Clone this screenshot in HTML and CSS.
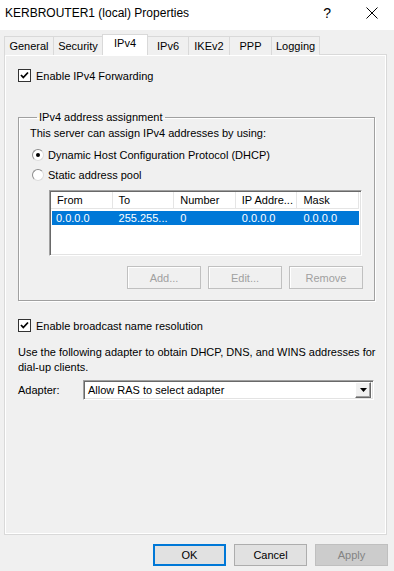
FILE: index.html
```html
<!DOCTYPE html>
<html lang="en">
<head>
    <meta charset="UTF-8">
    <meta name="viewport" content="width=device-width, initial-scale=1.0">
    <title>KERBROUTER1 (local) Properties</title>
    <link rel="stylesheet" href="styles.css">
</head>
<body>

    <div class="titlebar">
        <span class="title">KERBROUTER1 (local) Properties</span>
        <span class="help">?</span>
        <svg class="close" width="12" height="12" viewBox="0 0 12 12">
            <path d="M0.5 0.5 L11.5 11.5 M11.5 0.5 L0.5 11.5" stroke="#000" stroke-width="1" fill="none"/>
        </svg>
    </div>

    <div class="tabs">
        <div class="tab">General</div>
        <div class="tab">Security</div>
        <div class="tab active">IPv4</div>
        <div class="tab">IPv6</div>
        <div class="tab">IKEv2</div>
        <div class="tab">PPP</div>
        <div class="tab">Logging</div>
    </div>

    <div class="page">
        <label class="check-row">
            <span class="checkbox">
                <svg width="11" height="11" viewBox="0 0 11 11"><path d="M2 5 L4.3 7.5 L9 2.5" stroke="#000" stroke-width="1.8" fill="none"/></svg>
            </span>
            Enable IPv4 Forwarding
        </label>

        <fieldset class="group">
            <legend>IPv4 address assignment</legend>
            <div class="group-text">This server can assign IPv4 addresses by using:</div>
            <label class="radio-row">
                <span class="radio checked"></span>
                Dynamic Host Configuration Protocol (DHCP)
            </label>
            <label class="radio-row second">
                <span class="radio"></span>
                Static address pool
            </label>

            <div class="listview">
                <div class="lv-header">
                    <div class="lv-col first">From</div>
                    <div class="lv-col">To</div>
                    <div class="lv-col">Number</div>
                    <div class="lv-col">IP Addre...</div>
                    <div class="lv-col">Mask</div>
                </div>
                <div class="lv-row selected">
                    <div class="lv-cell first">0.0.0.0</div>
                    <div class="lv-cell">255.255...</div>
                    <div class="lv-cell">0</div>
                    <div class="lv-cell">0.0.0.0</div>
                    <div class="lv-cell">0.0.0.0</div>
                </div>
            </div>

            <div class="pool-buttons">
                <button class="btn disabled">Add...</button>
                <button class="btn disabled">Edit...</button>
                <button class="btn disabled">Remove</button>
            </div>
        </fieldset>

        <label class="check-row broadcast">
            <span class="checkbox">
                <svg width="11" height="11" viewBox="0 0 11 11"><path d="M2 5 L4.3 7.5 L9 2.5" stroke="#000" stroke-width="1.8" fill="none"/></svg>
            </span>
            Enable broadcast name resolution
        </label>

        <p class="note">Use the following adapter to obtain DHCP, DNS, and WINS addresses for<br>dial-up clients.</p>

        <div class="adapter-row">
            <span class="adapter-label">Adapter:</span>
            <div class="combo">
                <span class="combo-text">Allow RAS to select adapter</span>
                <span class="combo-btn">
                    <svg width="7" height="4" viewBox="0 0 7 4"><path d="M0 0 H7 L3.5 4 Z" fill="#000"/></svg>
                </span>
            </div>
        </div>
    </div>

    <div class="footer">
        <button class="btn dlg default">OK</button>
        <button class="btn dlg">Cancel</button>
        <button class="btn dlg off">Apply</button>
    </div>

</body>
</html>
```

FILE: styles.css
```css
* {
    margin: 0;
    padding: 0;
    box-sizing: border-box;
}

body {
    width: 394px;
    height: 571px;
    overflow: hidden;
    background-color: #f0f0f0;
    font-family: "Liberation Sans", Arial, sans-serif;
    font-size: 11px;
    color: #000;
}

/* title bar */
.titlebar {
    height: 30px;
    background-color: #fff;
    display: flex;
    align-items: center;
    padding-left: 5px;
}

.title {
    flex: 1;
    font-size: 12px;
    margin-top: -4px;
}

.help {
    font-size: 14px;
    margin-right: 35px;
    margin-top: -4px;
}

.close {
    margin-right: 16px;
    margin-top: -4px;
}

/* tabs */
.tabs {
    display: flex;
    align-items: flex-end;
    height: 20px;
    margin-top: 5px;
    padding-left: 4px;
    position: relative;
    z-index: 1;
}

.tab {
    height: 19px;
    line-height: 19px;
    padding: 0 4px;
    border: 1px solid #d9d9d9;
    border-bottom: none;
    margin-right: -1px;
    background-color: #f0f0f0;
    text-align: center;
}

.tab:nth-child(1) { width: 50px; }
.tab:nth-child(2) { width: 50px; }
.tab:nth-child(3) { width: 46px; }
.tab:nth-child(4) { width: 42px; }
.tab:nth-child(5) { width: 42px; }
.tab:nth-child(6) { width: 43px; }
.tab:nth-child(7) { width: 49px; }

.tab.active {
    height: 21px;
    line-height: 17px;
    background-color: #fff;
    position: relative;
    z-index: 2;
}

/* tab page */
.page {
    height: 481px;
    margin: -1px 7px 0 4px;
    border: 1px solid #d9d9d9;
    box-shadow: inset 1px 1px 0 #fff, inset -1px -1px 0 #fff;
    padding: 14px 11px 0 13px;
}

.check-row {
    display: flex;
    align-items: center;
    height: 13px;
}

.checkbox {
    width: 13px;
    height: 13px;
    border: 1px solid #333;
    background-color: #fff;
    margin-right: 5px;
    display: flex;
    align-items: center;
    justify-content: center;
}

/* group box */
.group {
    margin-top: 29px;
    border: 1px solid #a0a0a0;
    box-shadow: inset 1px 1px 0 #fff, 1px 1px 0 #fff;
    padding: 3px 11px 10px 11px;
    height: 190px;
}

.group legend {
    margin-left: 7px;
    padding: 0 2px;
    line-height: 13px;
}

.group-text {
    line-height: 13px;
}

.radio-row {
    display: flex;
    align-items: center;
    height: 13px;
    margin-top: 8px;
    padding-left: 2px;
}

.radio-row.second {
    margin-top: 7px;
}

.radio {
    width: 12px;
    height: 12px;
    border-radius: 50%;
    border: 1px solid #8c8c8c;
    border-bottom-color: #dcdcdc;
    border-right-color: #dcdcdc;
    background-color: #fff;
    margin-right: 4px;
    display: flex;
    align-items: center;
    justify-content: center;
}

.radio.checked::after {
    content: "";
    width: 4px;
    height: 4px;
    border-radius: 50%;
    background-color: #000;
}

/* list view */
.listview {
    margin: 9px 0 0 19px;
    width: 313px;
    height: 66px;
    background-color: #fff;
    border: 1px solid #a0a0a0;
    border-right-color: #fff;
    border-bottom-color: #fff;
    box-shadow: inset 1px 1px 0 #696969, inset -1px -1px 0 #e3e3e3;
    padding: 1px 2px 0 1px;
}

.lv-header {
    display: flex;
    height: 17px;
    border-bottom: 1px solid #e5e5e5;
}

.lv-col {
    width: 62px;
    line-height: 16px;
    padding-left: 6px;
    border-right: 1px solid #e5e5e5;
}

.lv-row {
    display: flex;
    height: 14px;
    margin-top: 2px;
    margin-left: 1px;
}

.lv-row.selected {
    background-color: #0078d7;
    color: #fff;
}

.lv-cell {
    width: 62px;
    line-height: 14px;
    padding-left: 6px;
}

.lv-cell.first {
    width: 61px;
    padding-left: 4px;
}

/* buttons */
.pool-buttons {
    display: flex;
    justify-content: flex-end;
    gap: 7px;
    margin-top: 10px;
}

.btn {
    font-family: "Liberation Sans", Arial, sans-serif;
    font-size: 11px;
    width: 74px;
    height: 23px;
    background-color: #e1e1e1;
    border: 1px solid #adadad;
    color: #000;
}

.btn.disabled {
    background-color: #f0f0f0;
    border-color: #c0c0c0;
    box-shadow: inset 1px 1px 0 #fff;
    color: #a0a0a0;
}

.check-row.broadcast {
    margin-top: 18px;
}

.note {
    margin-top: 13px;
    line-height: 15px;
    white-space: nowrap;
}

/* adapter combo */
.adapter-row {
    display: flex;
    align-items: center;
    margin-top: 5px;
}

.adapter-label {
    width: 65px;
}

.combo {
    width: 291px;
    height: 20px;
    display: flex;
    align-items: center;
    background-color: #fff;
    border: 1px solid #a0a0a0;
    border-right-color: #fff;
    border-bottom-color: #fff;
    box-shadow: inset 1px 1px 0 #696969, inset -1px -1px 0 #e3e3e3;
    padding: 2px;
}

.combo-text {
    flex: 1;
    padding-left: 2px;
}

.combo-btn {
    width: 16px;
    height: 16px;
    background-color: #f0f0f0;
    border: 1px solid #fff;
    border-right-color: #696969;
    border-bottom-color: #696969;
    box-shadow: inset -1px -1px 0 #a0a0a0;
    display: flex;
    align-items: center;
    justify-content: center;
}

/* dialog buttons */
.footer {
    display: flex;
    justify-content: flex-end;
    gap: 8px;
    margin-top: 9px;
    padding-right: 6px;
}

.btn.dlg {
    width: 73px;
    height: 22px;
}

.btn.default {
    border: 2px solid #0078d7;
}

.btn.off {
    background-color: #cccccc;
    border-color: #bfbfbf;
    color: #838383;
}
```
